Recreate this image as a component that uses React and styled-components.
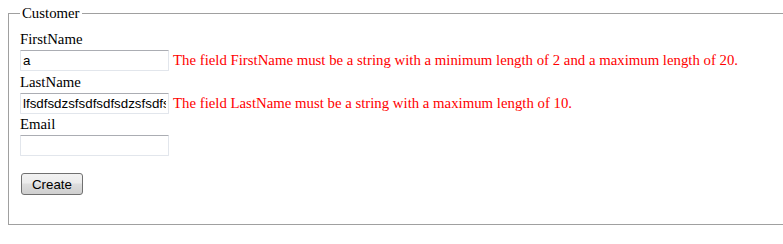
import React from "react";
import styled, { createGlobalStyle } from "styled-components";

const Global = createGlobalStyle`
  html, body { margin: 0; padding: 0; background: #fff; overflow: hidden; }
  body { font-family: "Liberation Serif", "Times New Roman", serif; font-size: 14.8px; color: #000; }
`;

const Fieldset = styled.fieldset`
  margin: 4px 0 0 8px;
  width: 820px;
  box-sizing: border-box;
  border: 1px solid #a0a0a0;
  padding: 7px 12px 10px 11px;
  min-width: 0;
`;

const Legend = styled.legend`
  padding: 0 2px;
  font-size: 14.8px;
  line-height: 18px;
`;

const Label = styled.div`
  height: 21px;
  line-height: 21px;
`;

const FieldRow = styled.div`
  display: flex;
  align-items: baseline;
  gap: 4px;
  height: 21.5px;
`;

const Input = styled.input`
  box-sizing: border-box;
  width: 149px;
  height: 21px;
  margin: 0;
  padding: 0 2px;
  border: 1px solid #e2e6ec;
  border-top-color: #abadb3;
  border-radius: 1px;
  font-family: "Liberation Sans", Arial, sans-serif;
  font-size: 13.33px;
  color: #000;
  background: #fff;
  outline: none;
`;

const Error = styled.span`
  color: #ff0000;
  white-space: nowrap;
`;

const ButtonRow = styled.div`
  margin: 16.5px 0 19px 1px;
`;

const Button = styled.button`
  box-sizing: border-box;
  width: 62px;
  height: 22px;
  margin: 0;
  padding: 0;
  border: 1px solid #707070;
  border-radius: 3px;
  background: linear-gradient(#f2f2f2 0%, #ebebeb 45%, #dddddd 50%, #cfcfcf 100%);
  font-family: "Liberation Sans", Arial, sans-serif;
  font-size: 13.33px;
  color: #000;
`;

const fields = [
  { name: "FirstName", value: "a", error: "The field FirstName must be a string with a minimum length of 2 and a maximum length of 20." },
  { name: "LastName", value: "lfsdfsdzsfsdfsdfsdzsfsdfsdfsdf", error: "The field LastName must be a string with a maximum length of 10." },
  { name: "Email", value: "", error: "" },
];

export default function App() {
  return (
    <>
      <Global />
      <form onSubmit={(e) => e.preventDefault()}>
        <Fieldset>
          <Legend>Customer</Legend>
          {fields.map((f) => (
            <div key={f.name}>
              <Label>{f.name}</Label>
              <FieldRow>
                <Input defaultValue={f.value} />
                {f.error && <Error>{f.error}</Error>}
              </FieldRow>
            </div>
          ))}
          <ButtonRow>
            <Button type="submit">Create</Button>
          </ButtonRow>
        </Fieldset>
      </form>
    </>
  );
}
